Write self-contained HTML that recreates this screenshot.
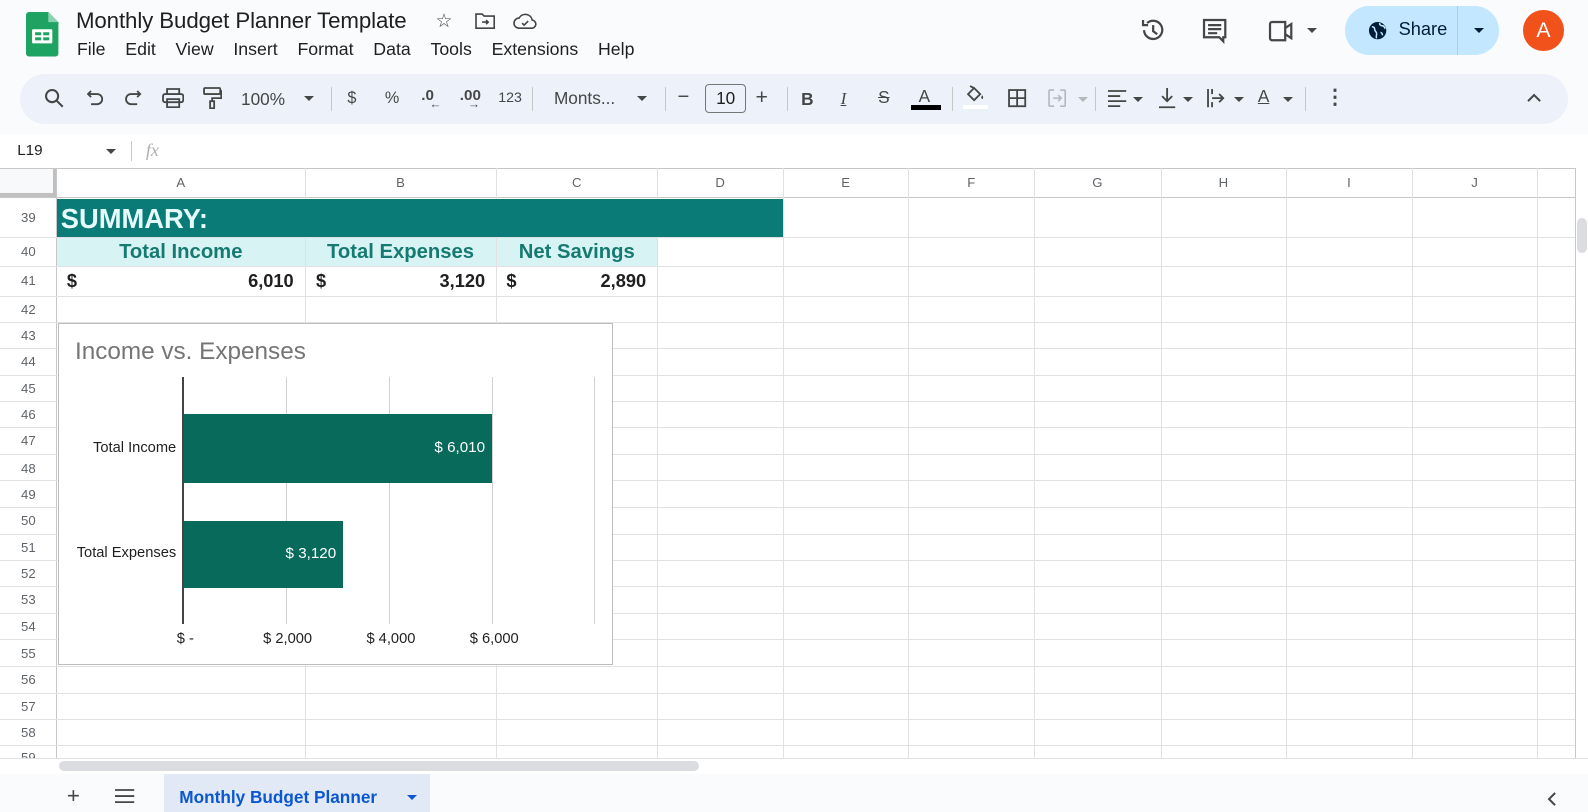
<!DOCTYPE html>
<html><head><meta charset="utf-8"><style>
*{margin:0;padding:0;box-sizing:border-box}
html,body{width:1588px;height:812px;overflow:hidden;background:#fff}
#w{position:relative;width:1568px;height:802px;zoom:1.01276;font-family:"Liberation Sans",sans-serif;color:#1f1f1f;background:#f9fbfd}
.a{position:absolute}
.t{position:absolute;white-space:nowrap}
.menu span{margin-right:19.5px}
.tb{font-size:16px;color:#444746}
.sep{position:absolute;top:86px;width:1px;height:24px;background:#c7c7c7}
.car{position:absolute;width:0;height:0;border-left:5px solid transparent;border-right:5px solid transparent;border-top:5px solid #444746}
.vl{position:absolute;width:1px;background:#e1e1e1}
.hl{position:absolute;height:1px;background:#e1e1e1}
.rn{position:absolute;left:0;width:56px;text-align:center;font-size:13px;color:#5f6368}
.ch{position:absolute;top:166px;height:29px;line-height:29px;text-align:center;font-size:13px;color:#5f6368}
.mont{font-family:"Liberation Sans",sans-serif;font-weight:bold}
</style></head><body><div id="w">
<svg class="a" style="left:26px;top:12px" width="32" height="44" viewBox="0 0 32 44"><path d="M3 0h19l10 10v31a3 3 0 0 1-3 3H3a3 3 0 0 1-3-3V3a3 3 0 0 1 3-3z" fill="#1ea362"/><path d="M22 0v10h10z" fill="#8ed1b1"/><rect x="6" y="17" width="20" height="14" rx="1" fill="#fff"/><rect x="9" y="20" width="6" height="3" fill="#1ea362"/><rect x="17" y="20" width="6" height="3" fill="#1ea362"/><rect x="9" y="25" width="6" height="3" fill="#1ea362"/><rect x="17" y="25" width="6" height="3" fill="#1ea362"/></svg>
<div class="t" style="left:75px;top:8px;font-size:22px;letter-spacing:-0.1px">Monthly Budget Planner Template</div>
<div class="t" style="left:430px;top:9px;font-size:19px;color:#444">☆</div>
<svg class="a" style="left:469px;top:12px" width="20" height="18" viewBox="0 0 20 18" fill="none" stroke="#444" stroke-width="1.6"><path d="M1 2h6l2 2h10v12H1z"/><path d="M7 10h6m-2-2l2 2-2 2"/></svg>
<svg class="a" style="left:507px;top:12px" width="24" height="17" viewBox="0 0 24 17" fill="none" stroke="#444" stroke-width="1.6"><path d="M6 16a5 5 0 0 1 0-10 7 7 0 0 1 13 2 4 4 0 0 1-1 8z"/><path d="M9 11l2 2 4-4"/></svg>
<div class="t menu" style="left:76px;top:39px;font-size:17.5px"><span>File</span><span>Edit</span><span>View</span><span>Insert</span><span>Format</span><span>Data</span><span>Tools</span><span>Extensions</span><span>Help</span></div>
<svg class="a" style="left:1126px;top:17px" width="26" height="26" viewBox="0 0 26 26" fill="none" stroke="#444746" stroke-width="2.2"><path d="M4 13a9 9 0 1 0 3-7"/><path d="M3 3v5h5"/><path d="M13 8v6l4 3"/></svg>
<svg class="a" style="left:1187px;top:18px" width="26" height="26" viewBox="0 0 26 26" fill="none" stroke="#444746" stroke-width="2.2"><path d="M2 2h21v17h-2v4l-4-4H2z"/><path d="M6 7h13M6 11h13M6 15h9"/></svg>
<svg class="a" style="left:1252px;top:20px" width="28" height="22" viewBox="0 0 28 22" fill="none" stroke="#444746" stroke-width="2.2"><path d="M4 2h13v18H4a2 2 0 0 1-2-2V4a2 2 0 0 1 2-2z"/><path d="M17 8l6-4v14l-6-4"/></svg>
<div class="car" style="left:1291px;top:28px"></div>
<div class="a" style="left:1328px;top:6px;width:152px;height:48px;border-radius:24px;background:#c2e7ff"></div>
<div class="a" style="left:1439px;top:6px;width:1px;height:48px;background:#a7cfe9"></div>
<svg class="a" style="left:1351px;top:21px" width="19" height="19" viewBox="0 0 20 20"><circle cx="10" cy="10" r="9" fill="#001d35"/><path d="M4 6c2 0 3 1 3 3s2 2 2 4-1 3 0 5M12 2c0 2 1 3 3 3s2 2 3 3M13 12c1 0 2 1 2 3" stroke="#c2e7ff" stroke-width="1.6" fill="none"/></svg>
<div class="t" style="left:1381px;top:19px;font-size:18px;color:#001d35">Share</div>
<div class="car" style="left:1455px;top:28px;border-top-color:#001d35"></div>
<div class="a" style="left:1504px;top:10px;width:40px;height:40px;border-radius:50%;background:#f1511b;color:#fff;font-size:21px;text-align:center;line-height:40px">A</div>
<div class="a" style="left:20px;top:73px;width:1528px;height:49px;border-radius:25px;background:#edf2fa"></div>
<svg class="a" style="left:43px;top:87px" width="20" height="20" viewBox="0 0 20 20" fill="none" stroke="#444746" stroke-width="2"><circle cx="8" cy="8" r="6"/><path d="M12.5 12.5l6 6"/></svg>
<svg class="a" style="left:85px;top:88px" width="18" height="18" viewBox="0 0 18 18" fill="none" stroke="#444746" stroke-width="1.8"><path d="M5 2L2 5l3 3"/><path d="M2 5h9a5 5 0 0 1 0 10H5"/></svg>
<svg class="a" style="left:122px;top:88px" width="18" height="18" viewBox="0 0 18 18" fill="none" stroke="#444746" stroke-width="1.8"><path d="M13 2l3 3-3 3"/><path d="M16 5H7a5 5 0 0 0 0 10h6"/></svg>
<svg class="a" style="left:160px;top:87px" width="22" height="20" viewBox="0 0 22 20" fill="none" stroke="#444746" stroke-width="1.8"><path d="M5 6V1h12v5"/><rect x="1" y="6" width="20" height="8" rx="2"/><rect x="5" y="11" width="12" height="8"/></svg>
<svg class="a" style="left:199px;top:86px" width="20" height="22" viewBox="0 0 20 22" fill="none" stroke="#444746" stroke-width="1.8"><rect x="2" y="1" width="16" height="6" rx="1"/><path d="M18 4h1v7H10v3"/><rect x="8" y="14" width="4" height="7"/></svg>
<div class="t tb" style="left:238px;top:88px;font-size:17px">100%</div>
<div class="car" style="left:300px;top:95px"></div>
<div class="sep" style="left:327px"></div>
<div class="t tb" style="left:343px;top:88px">$</div>
<div class="t tb" style="left:380px;top:88px">%</div>
<div class="t tb" style="left:416px;top:86px;font-weight:bold;font-size:15px">.0</div><div class="t" style="left:424px;top:96px;font-size:12px;color:#444746">←</div>
<div class="t tb" style="left:454px;top:86px;font-weight:bold;font-size:15px">.00</div><div class="t" style="left:462px;top:96px;font-size:12px;color:#444746">→</div>
<div class="t tb" style="left:492px;top:89px;font-size:14px">123</div>
<div class="sep" style="left:525px"></div>
<div class="t tb" style="left:547px;top:87px;font-size:17px">Monts...</div>
<div class="car" style="left:629px;top:95px"></div>
<div class="sep" style="left:657px"></div>
<div class="t tb" style="left:669px;top:85px;font-size:20px">−</div>
<div class="a" style="left:696px;top:83px;width:41px;height:29px;border:1px solid #747775;border-radius:4px;text-align:center;line-height:27px;font-size:17px;color:#1f1f1f">10</div>
<div class="t tb" style="left:746px;top:84px;font-size:21px">+</div>
<div class="sep" style="left:777px"></div>
<div class="t tb" style="left:791px;top:88px;font-weight:bold;font-size:17px">B</div>
<div class="t tb" style="left:830px;top:88px;font-style:italic;font-size:17px;font-family:'Liberation Serif',serif;text-decoration:underline">I</div>
<div class="t tb" style="left:867px;top:86px;font-size:17px;text-decoration:line-through">S</div>
<div class="t tb" style="left:907px;top:85px;font-size:17px">A</div>
<div class="a" style="left:900px;top:104px;width:29px;height:5px;background:#000"></div>
<div class="sep" style="left:940px"></div>
<svg class="a" style="left:953px;top:84px" width="20" height="18" viewBox="0 0 20 18"><path d="M3 9l6-6 6 6-6 6z" fill="none" stroke="#444746" stroke-width="1.8"/><path d="M5 1l4 2" stroke="#444746" stroke-width="1.8"/><path d="M17 10q2 3 0 4-2-1 0-4z" fill="#444746"/></svg>
<div class="a" style="left:951px;top:104px;width:25px;height:4px;background:#fff"></div>
<svg class="a" style="left:994px;top:87px" width="20" height="20" viewBox="0 0 20 20" fill="none" stroke="#444746" stroke-width="1.8"><rect x="2" y="2" width="16" height="16"/><path d="M10 2v16M2 10h16"/></svg>
<svg class="a" style="left:1034px;top:87px" width="20" height="20" viewBox="0 0 20 20" fill="none" stroke="#b5b8bb" stroke-width="1.6"><path d="M2 2h5M13 2h5M2 18h5M13 18h5M2 2v16M18 2v16M6 10h8M11 7l3 3-3 3"/></svg>
<div class="car" style="left:1064px;top:96px;border-top-color:#b5b8bb"></div>
<div class="sep" style="left:1081px"></div>
<svg class="a" style="left:1093px;top:88px" width="20" height="18" viewBox="0 0 20 18" stroke="#444746" stroke-width="1.8"><path d="M1 2h18M1 7h12M1 12h18M1 17h12"/></svg>
<div class="car" style="left:1119px;top:96px"></div>
<svg class="a" style="left:1143px;top:86px" width="18" height="22" viewBox="0 0 18 22" fill="none" stroke="#444746" stroke-width="1.8"><path d="M9 1v13M4 9l5 5 5-5M1 20h16"/></svg>
<div class="car" style="left:1168px;top:96px"></div>
<svg class="a" style="left:1191px;top:87px" width="20" height="20" viewBox="0 0 20 20" fill="none" stroke="#444746" stroke-width="1.8"><path d="M2 1v18M6 1v5M6 14v5M6 10h11M13 6l4 4-4 4"/></svg>
<div class="car" style="left:1218px;top:96px"></div>
<div class="t tb" style="left:1242px;top:85px;font-size:17px;text-decoration:underline">A</div>
<div class="car" style="left:1267px;top:96px"></div>
<div class="sep" style="left:1289px"></div>
<div class="t tb" style="left:1308px;top:84px;font-size:20px;font-weight:bold">⋮</div>
<svg class="a" style="left:1508px;top:92px" width="14" height="9" viewBox="0 0 14 9" fill="none" stroke="#444746" stroke-width="2"><path d="M1 8l6-6 6 6"/></svg>
<div class="a" style="left:0;top:132px;width:1568px;height:34px;background:#fff"></div>
<div class="t" style="left:17px;top:140px;font-size:15px">L19</div>
<div class="car" style="left:105px;top:147px"></div>
<div class="a" style="left:129px;top:139px;width:1px;height:20px;background:#c7c7c7"></div>
<div class="t" style="left:144px;top:138px;font-size:18px;color:#b0b0b0;font-style:italic;font-family:'Liberation Serif',serif">fx</div>
<div class="a" style="left:0;top:166px;width:1568px;height:582px;background:#fff"></div>
<div class="a" style="left:0;top:166px;width:56px;height:29px;background:#f8f9fa;border-right:4px solid #c0c0c0;border-bottom:4px solid #c0c0c0"></div>
<div class="hl" style="left:0;top:166px;width:1555px;background:#c7c7c7"></div>
<div class="hl" style="left:0;top:195px;width:1555px;background:#c7c7c7"></div>
<div class="a" style="left:55px;top:166px;width:1px;height:582px;background:#c7c7c7"></div>
<div class="vl" style="left:301px;top:166px;height:582px"></div>
<div class="vl" style="left:490px;top:166px;height:582px"></div>
<div class="vl" style="left:649px;top:166px;height:582px"></div>
<div class="vl" style="left:773px;top:166px;height:582px"></div>
<div class="vl" style="left:897px;top:166px;height:582px"></div>
<div class="vl" style="left:1021px;top:166px;height:582px"></div>
<div class="vl" style="left:1146px;top:166px;height:582px"></div>
<div class="vl" style="left:1270px;top:166px;height:582px"></div>
<div class="vl" style="left:1394px;top:166px;height:582px"></div>
<div class="vl" style="left:1518px;top:166px;height:582px"></div>
<div class="vl" style="left:1555px;top:166px;height:582px;background:#c7c7c7"></div>
<div class="ch" style="left:56px;width:245px">A</div>
<div class="ch" style="left:301px;width:189px">B</div>
<div class="ch" style="left:490px;width:159px">C</div>
<div class="ch" style="left:649px;width:124px">D</div>
<div class="ch" style="left:773px;width:124px">E</div>
<div class="ch" style="left:897px;width:124px">F</div>
<div class="ch" style="left:1021px;width:125px">G</div>
<div class="ch" style="left:1146px;width:124px">H</div>
<div class="ch" style="left:1270px;width:124px">I</div>
<div class="ch" style="left:1394px;width:124px">J</div>
<div class="hl" style="left:0;top:234px;width:1555px"></div>
<div class="hl" style="left:0;top:263px;width:1555px"></div>
<div class="hl" style="left:0;top:292px;width:1555px"></div>
<div class="hl" style="left:0;top:318px;width:1555px"></div>
<div class="hl" style="left:0;top:344px;width:1555px"></div>
<div class="hl" style="left:0;top:370px;width:1555px"></div>
<div class="hl" style="left:0;top:396px;width:1555px"></div>
<div class="hl" style="left:0;top:422px;width:1555px"></div>
<div class="hl" style="left:0;top:448px;width:1555px"></div>
<div class="hl" style="left:0;top:474px;width:1555px"></div>
<div class="hl" style="left:0;top:501px;width:1555px"></div>
<div class="hl" style="left:0;top:527px;width:1555px"></div>
<div class="hl" style="left:0;top:553px;width:1555px"></div>
<div class="hl" style="left:0;top:579px;width:1555px"></div>
<div class="hl" style="left:0;top:605px;width:1555px"></div>
<div class="hl" style="left:0;top:631px;width:1555px"></div>
<div class="hl" style="left:0;top:658px;width:1555px"></div>
<div class="hl" style="left:0;top:684px;width:1555px"></div>
<div class="hl" style="left:0;top:710px;width:1555px"></div>
<div class="hl" style="left:0;top:736px;width:1555px"></div>
<div class="rn" style="top:207px">39</div>
<div class="rn" style="top:241px">40</div>
<div class="rn" style="top:270px">41</div>
<div class="rn" style="top:298px">42</div>
<div class="rn" style="top:324px">43</div>
<div class="rn" style="top:350px">44</div>
<div class="rn" style="top:376px">45</div>
<div class="rn" style="top:402px">46</div>
<div class="rn" style="top:428px">47</div>
<div class="rn" style="top:455px">48</div>
<div class="rn" style="top:481px">49</div>
<div class="rn" style="top:507px">50</div>
<div class="rn" style="top:533px">51</div>
<div class="rn" style="top:559px">52</div>
<div class="rn" style="top:585px">53</div>
<div class="rn" style="top:611px">54</div>
<div class="rn" style="top:638px">55</div>
<div class="rn" style="top:664px">56</div>
<div class="rn" style="top:690px">57</div>
<div class="rn" style="top:716px">58</div>
<div class="rn" style="top:741px;height:7px;overflow:hidden">59</div>
<div class="a" style="left:56px;top:196px;width:717px;height:38px;background:#0b7b77"></div>
<div class="t mont" style="left:60px;top:200px;font-size:27px;color:#e6fbfb">SUMMARY:</div>
<div class="a" style="left:56px;top:235px;width:593px;height:28px;background:#d8f3f3"></div>
<div class="vl" style="left:301px;top:235px;height:28px"></div>
<div class="vl" style="left:490px;top:235px;height:28px"></div>
<div class="t mont" style="left:56px;top:238px;width:245px;text-align:center;font-size:20px;color:#167a72">Total Income</div>
<div class="t mont" style="left:301px;top:238px;width:189px;text-align:center;font-size:20px;color:#167a72">Total Expenses</div>
<div class="t mont" style="left:490px;top:238px;width:159px;text-align:center;font-size:20px;color:#167a72">Net Savings</div>
<div class="t mont" style="left:66px;top:268px;font-size:18px">$</div>
<div class="t mont" style="left:150px;top:268px;width:140px;text-align:right;font-size:18px">6,010</div>
<div class="t mont" style="left:312px;top:268px;font-size:18px">$</div>
<div class="t mont" style="left:340px;top:268px;width:139px;text-align:right;font-size:18px">3,120</div>
<div class="t mont" style="left:500px;top:268px;font-size:18px">$</div>
<div class="t mont" style="left:520px;top:268px;width:118px;text-align:right;font-size:18px">2,890</div>
<div class="a" style="left:57px;top:319px;width:548px;height:338px;background:#fff;border:1px solid #bdbdbd"></div>
<div class="t" style="left:74px;top:334px;font-size:24px;color:#757575">Income vs. Expenses</div>
<div class="a" style="left:282px;top:372px;width:1px;height:244px;background:#d0d0d0"></div>
<div class="a" style="left:384px;top:372px;width:1px;height:244px;background:#d0d0d0"></div>
<div class="a" style="left:486px;top:372px;width:1px;height:244px;background:#d0d0d0"></div>
<div class="a" style="left:587px;top:372px;width:1px;height:244px;background:#d0d0d0"></div>
<div class="a" style="left:181px;top:409px;width:305px;height:68px;background:#076a5b"></div>
<div class="a" style="left:181px;top:514px;width:158px;height:67px;background:#076a5b"></div>
<div class="a" style="left:180px;top:372px;width:2px;height:244px;background:#444"></div>
<div class="t" style="left:380px;top:433px;width:99px;text-align:right;font-size:15px;color:#fff">$ 6,010</div>
<div class="t" style="left:232px;top:538px;width:100px;text-align:right;font-size:15px;color:#fff">$ 3,120</div>
<div class="t" style="left:60px;top:434px;width:114px;text-align:right;font-size:14.5px">Total Income</div>
<div class="t" style="left:50px;top:538px;width:124px;text-align:right;font-size:14.5px">Total Expenses</div>
<div class="t" style="left:143px;top:623px;width:80px;text-align:center;font-size:14.5px">$ -</div>
<div class="t" style="left:244px;top:623px;width:80px;text-align:center;font-size:14.5px">$ 2,000</div>
<div class="t" style="left:346px;top:623px;width:80px;text-align:center;font-size:14.5px">$ 4,000</div>
<div class="t" style="left:448px;top:623px;width:80px;text-align:center;font-size:14.5px">$ 6,000</div>
<div class="a" style="left:1556px;top:196px;width:12px;height:552px;background:#fff"></div>
<div class="a" style="left:1557px;top:215px;width:10px;height:35px;border-radius:5px;background:#dadce0"></div>
<div class="a" style="left:0;top:748px;width:1568px;height:16px;background:#fff;border-top:1px solid #e1e1e1"></div>
<div class="a" style="left:58px;top:751px;width:632px;height:10px;border-radius:5px;background:#dadce0"></div>
<div class="a" style="left:0;top:764px;width:1568px;height:38px;background:#f9fbfd"></div>
<div class="t" style="left:66px;top:773px;font-size:22px;color:#444746">+</div>
<svg class="a" style="left:114px;top:779px" width="19" height="14" viewBox="0 0 19 14" stroke="#444746" stroke-width="1.8"><path d="M0 1h19M0 7h19M0 13h19"/></svg>
<div class="a" style="left:162px;top:764px;width:263px;height:38px;background:#e1e9f7"></div>
<div class="t" style="left:177px;top:777px;font-size:17px;font-weight:bold;color:#0b57d0">Monthly Budget Planner</div>
<div class="car" style="left:402px;top:785px;border-top-color:#0b57d0"></div>
<svg class="a" style="left:1528px;top:782px" width="9" height="14" viewBox="0 0 9 14" fill="none" stroke="#444746" stroke-width="2"><path d="M8 1L2 7l6 6"/></svg>
</div></body></html>
